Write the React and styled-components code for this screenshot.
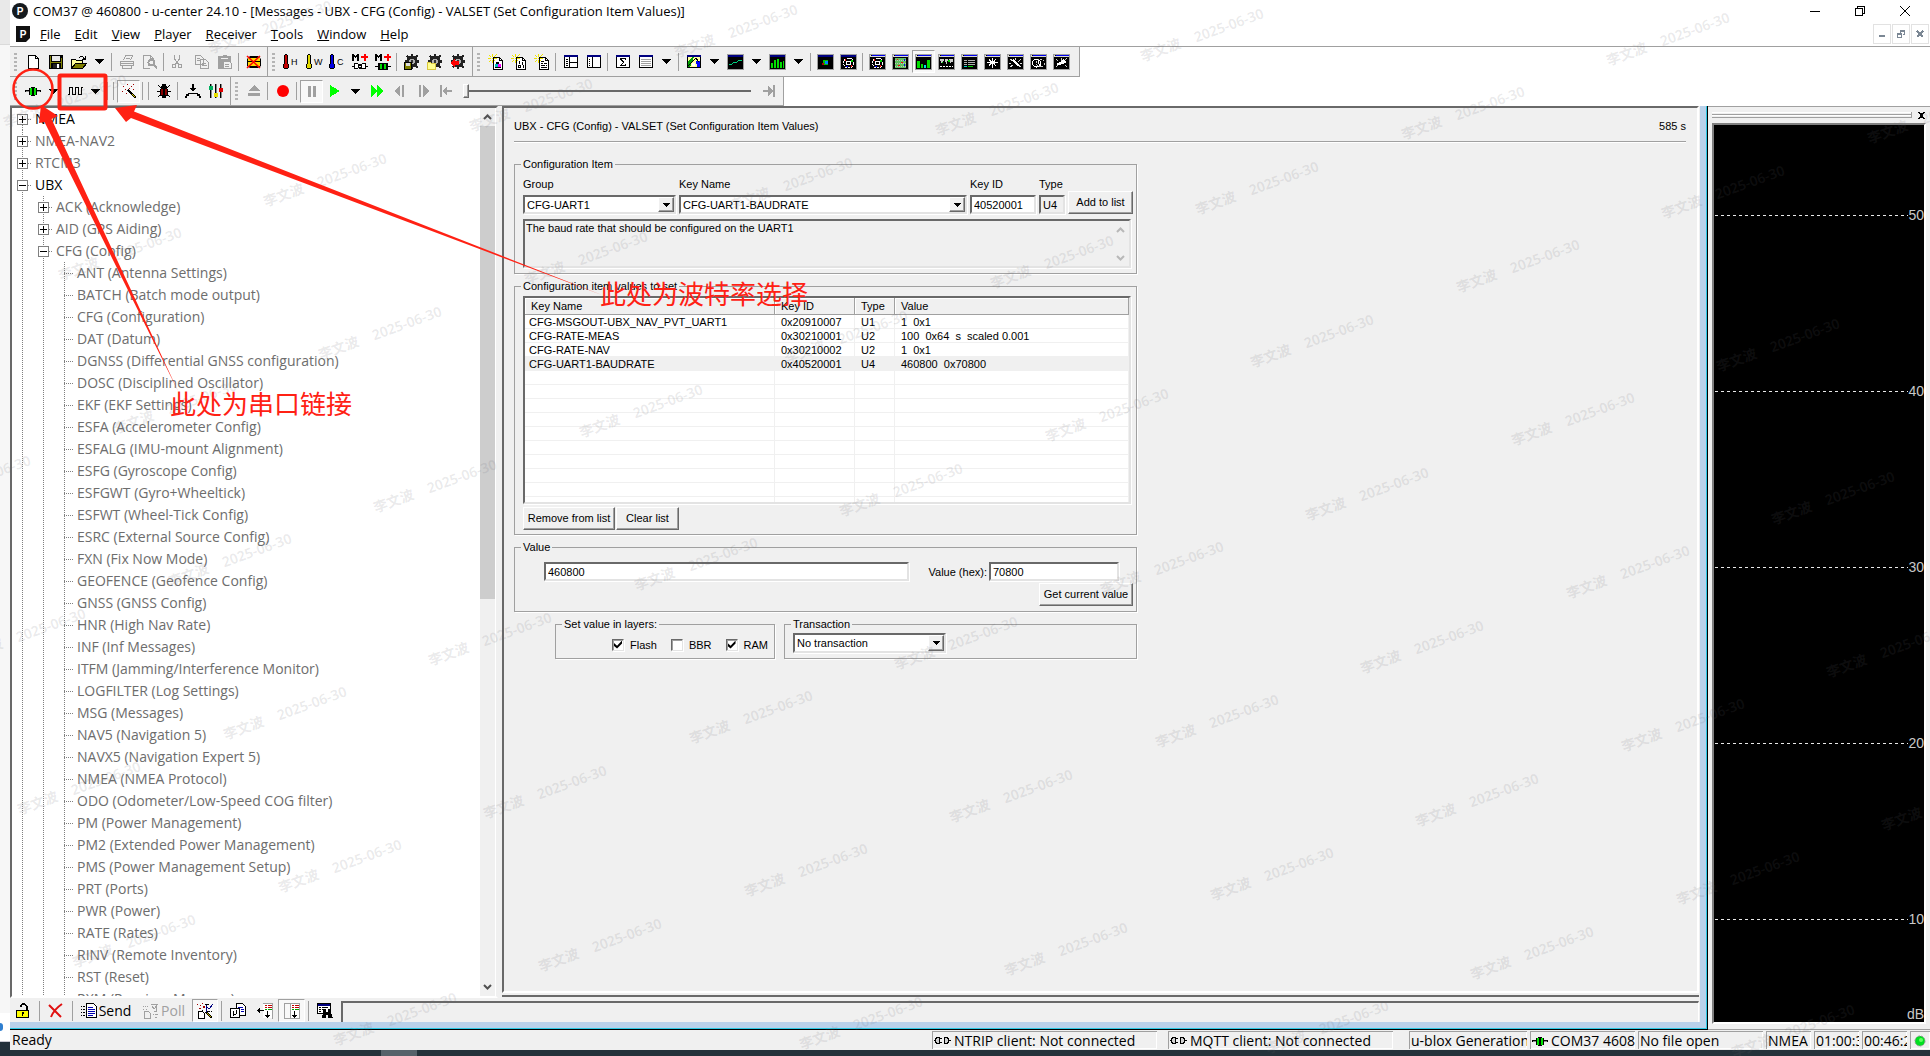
import React from "react";
import styled, { createGlobalStyle, css } from "styled-components";

const UI = `"Open Sans", "Noto Sans", "Noto Sans CJK SC", sans-serif`;
const SMALL = `"Liberation Sans", sans-serif`;
const CJK = `"Noto Sans CJK SC", sans-serif`;
const FACE = "#f0f0f0";
const RED = "#ff2114";

const Global = createGlobalStyle`
  * { box-sizing: border-box; }
  html, body, #root { height: 100%; }
  body { margin: 0; background: #26323a; overflow: hidden; font: 14px/18px ${UI}; color: #000; }
  button, input, select, textarea { font: inherit; color: inherit; margin: 0; border-radius: 0; }
  svg { flex: none; }
`;

const sunken = css`
  border: 2px solid;
  border-color: #696969 #e3e3e3 #e3e3e3 #696969;
  box-shadow: 1px 1px 0 #fff;
`;
const raised = css`
  border: 1px solid;
  border-color: #fff #696969 #696969 #fff;
  box-shadow: inset -1px -1px 0 #a0a0a0;
`;

/* ---------- frame ---------- */
const Desktop = styled.div`
  position: relative;
  display: flex;
  height: 100vh;
  overflow: hidden;
`;
const Behind = styled.aside`
  flex: 0 0 10px;
  display: flex;
  flex-direction: column;
`;
const BehindPart = styled.div`
  flex: ${(p) => p.$size};
  background: ${(p) => p.$bg};
  border-bottom: ${(p) => p.$line || "0"};
  display: flex;
  align-items: center;
`;
const BlueDot = styled.i`
  width: 3px;
  height: 8px;
  background: #2f7fd0;
  border-radius: 0 4px 4px 0;
`;
const Window = styled.div`
  flex: 1;
  min-width: 0;
  display: flex;
  flex-direction: column;
  background: #fff;
`;
const Taskbar = styled.div`
  flex: 0 0 6px;
  background: #24323a;
  display: flex;
  padding-left: 371px;
`;
const TaskButton = styled.i`
  width: 36px;
  background: #56626a;
`;
const TitleBar = styled.header`
  flex: 0 0 24px;
  display: flex;
  align-items: center;
  padding: 0 3px 2px 2px;
`;
const Title = styled.h1`
  margin: 0 0 0 5px;
  flex: 1;
  font: 13px/18px ${UI};
  white-space: nowrap;
`;
const Caption = styled.button`
  width: 45px;
  height: 22px;
  padding: 0;
  border: 0;
  background: none;
  display: grid;
  place-items: center;
`;
const MenuBar = styled.nav`
  flex: 0 0 22px;
  display: flex;
  align-items: center;
  padding: 0 1px 2px 6px;
  border-bottom: 1px solid #a0a0a0;
`;
const Menus = styled.div`
  flex: 1;
  display: flex;
  padding-left: 3px;
`;
const MenuItem = styled.button`
  border: 0;
  background: none;
  padding: 0 7px;
  font-size: 13px;
  white-space: nowrap;
  &::first-letter { text-decoration: underline; }
`;
const ChildCaption = styled.button`
  width: 18px;
  height: 20px;
  margin-left: 1px;
  padding: 0;
  border: 1px solid #e2e2e2;
  background: #fff;
  display: grid;
  place-items: center;
`;

/* ---------- tool bars ---------- */
const BarRow = styled.div`
  display: flex;
  height: ${(p) => p.$h || 30}px;
  background: #fff;
`;
const Bar = styled.div`
  display: flex;
  align-items: center;
  padding: 0 ${(p) => p.$tail || 3}px 0 2px;
  background: ${FACE};
  border-right: 1px solid #a0a0a0;
  border-bottom: 1px solid #a0a0a0;
`;
const Grip = styled.i`
  width: 3px;
  height: 18px;
  margin: 0 4px 0 2px;
  background: repeating-linear-gradient(#b4b4b4 0 2px, transparent 2px 4px);
`;
const Tool = styled.button`
  width: 23px;
  height: 23px;
  flex: none;
  padding: 0;
  display: grid;
  place-items: center;
  border: 1px solid;
  border-color: ${(p) => (p.$on ? "#a0a0a0 #fff #fff #a0a0a0" : "transparent")};
  background: ${(p) => (p.$on ? "#f8f8f8" : "transparent")};
`;
const CaretTool = styled(Tool)`
  width: 19px;
`;
const Divider = styled.i`
  flex: 0 0 6px;
  height: 18px;
  border-left: 1px solid #a0a0a0;
  margin: 0 -2px 0 2px;
`;
const Slider = styled.input`
  appearance: none;
  width: 288px;
  height: 16px;
  margin: 0 6px;
  background: linear-gradient(#696969, #696969) 0 7px / 100% 2px no-repeat;
  &::-webkit-slider-thumb {
    appearance: none;
    width: 6px;
    height: 14px;
    background: ${FACE};
    ${raised}
  }
`;

/* ---------- work area ---------- */
const Work = styled.main`
  flex: 1;
  min-height: 0;
  display: flex;
`;
const Child = styled.section`
  flex: 1;
  min-width: 0;
  display: flex;
  flex-direction: column;
  padding: 0 8px 8px 0;
  background: ${FACE};
  box-shadow: inset -1px -1px 0 #000, inset -2px -2px 0 #2cc8e4, inset -8px -8px 0 #b9d1ea;
`;
const Split = styled.div`
  flex: 1;
  min-height: 0;
  display: flex;
  gap: 4px;
`;
const TreePane = styled.div`
  flex: 0 0 488px;
  display: flex;
  overflow: hidden;
  background: #fff;
  border: 2px solid;
  border-color: #696969 ${FACE} #fff #696969;
`;
const TreeList = styled.ul`
  flex: 1;
  margin: 0;
  padding: 0;
  list-style: none;
  overflow: hidden;
`;
const TreeRow = styled.li`
  display: flex;
  height: 22px;
  line-height: 22px;
  color: ${(p) => (p.$strong ? "#000" : "#6d6d6d")};
  white-space: nowrap;
`;
const dots = (dir) => `repeating-linear-gradient(${dir}, #808080 0 1px, transparent 1px 2px)`;
const Guide = styled.span`
  flex: 0 0 21px;
  margin-right: ${(p) => (p.$branch ? 2 : 0)}px;
  display: grid;
  place-items: center;
  background:
    ${dots("180deg")} 10px ${(p) => (p.$first ? "11px" : "0")} / 1px 100% no-repeat
    ${(p) => (p.$branch ? `, ${dots("90deg")} 10px 11px / 10px 1px no-repeat` : "")};
`;
const Expander = styled.button`
  width: 11px;
  height: 11px;
  padding: 0;
  border: 1px solid #808080;
  background:
    linear-gradient(#000, #000) center / 7px 1px no-repeat,
    ${(p) => (p.$open ? "" : "linear-gradient(#000, #000) center / 1px 7px no-repeat,")}
    #fff;
`;
const ScrollTrack = styled.div`
  flex: 0 0 15px;
  margin-right: 1px;
  display: flex;
  flex-direction: column;
  background: ${FACE};
`;
const ScrollButton = styled.button`
  height: ${(p) => p.$size || 18}px;
  padding: 0;
  border: 0;
  background: ${FACE};
  display: grid;
  place-items: center;
`;
const Thumb = styled.div`
  flex: ${(p) => p.$grow};
  background: ${(p) => p.$bg || "transparent"};
`;
const PanelColumn = styled.div`
  flex: 1;
  min-width: 0;
  display: flex;
  flex-direction: column;
  padding-right: 1px;
`;
const Panel = styled.div`
  flex: 1;
  min-height: 0;
  padding: 10px 11px 0 10px;
  font: 11px/12px ${SMALL};
  border: 2px solid;
  border-color: #696969 #fff #fff #696969;
`;
const PanelEdge = styled.i`
  height: 2px;
  margin: 2px 0 1px;
  background: #696969;
`;
const PanelHead = styled.div`
  display: flex;
  justify-content: space-between;
  align-items: center;
  height: 24px;
  padding-bottom: 8px;
  border-bottom: 1px solid #a0a0a0;
  box-shadow: 0 1px 0 #fff;
`;
const Form = styled.form`
  display: flex;
  flex-direction: column;
  gap: 6px;
  width: 623px;
  margin-top: 16px;
`;
const Group = styled.fieldset`
  margin: 0;
  min-width: 0;
  flex: ${(p) => p.$flex || "none"};
  padding: ${(p) => p.$pad};
  border: 1px solid #a0a0a0;
  box-shadow: 1px 1px 0 #fff;
`;
const Legend = styled.legend`
  height: 12px;
  margin-left: -2px;
  padding: 0 2px;
`;
const Line = styled.div`
  display: flex;
  align-items: flex-end;
  gap: ${(p) => p.$gap ?? 3}px;
`;
const Field = styled.label`
  flex: ${(p) => p.$flex};
  min-width: 0;
  display: flex;
  flex-direction: column;
  gap: 5px;
`;
const TextBox = styled.input`
  width: ${(p) => p.$w || "100%"};
  height: 19px;
  padding: 0 2px;
  background: #fff;
  ${sunken}
  &:read-only { background: ${FACE}; }
`;
const Combo = styled.span`
  display: grid;
  width: ${(p) => p.$w || "100%"};
  height: ${(p) => p.$h || 19}px;
  > * { grid-area: 1 / 1; }
`;
const Select = styled.select`
  appearance: none;
  width: 100%;
  height: 100%;
  padding: 0 18px 0 2px;
  background: #fff;
  ${sunken}
`;
const ComboArrow = styled.span`
  justify-self: end;
  align-self: stretch;
  width: 16px;
  margin: 2px;
  background: ${FACE};
  display: grid;
  place-items: center;
  pointer-events: none;
  ${raised}
`;
const PushButton = styled.button`
  width: ${(p) => p.$w}px;
  height: 23px;
  padding: 0 0 2px;
  background: ${FACE};
  white-space: nowrap;
  ${raised}
`;
const Description = styled.div`
  display: flex;
  height: 49px;
  margin: 5px 2px 0 0;
  ${sunken}
`;
const DescriptionText = styled.textarea`
  flex: 1;
  padding: 1px;
  border: 0;
  resize: none;
  background: ${FACE};
`;
const ListBox = styled.div`
  height: 208px;
  margin: 0 2px 3px 0;
  overflow: hidden;
  background: #fff;
  ${sunken}
`;
const Table = styled.table`
  width: 100%;
  table-layout: fixed;
  border-spacing: 0;
  th {
    height: 17px;
    padding: 0 0 0 6px;
    font-weight: normal;
    text-align: left;
    background: ${FACE};
    border-right: 1px solid #a0a0a0;
    border-bottom: 1px solid #a0a0a0;
    box-shadow: inset 1px 1px 0 #fff;
  }
  td {
    height: 14px;
    padding: 1px 0 0 6px;
    line-height: 12px;
    white-space: pre;
    border-right: 1px solid ${FACE};
    border-bottom: 1px solid ${FACE};
  }
  td:first-child { padding-left: 4px; }
`;
const ListRow = styled.tr`
  background: ${(p) => (p.$selected ? FACE : "#fff")};
`;
const ValueLine = styled(Line)`
  align-items: center;
  margin: 0 14px 0 21px;
`;
const HexLabel = styled.label`
  flex: 1;
  text-align: right;
`;
const RightLine = styled.div`
  display: flex;
  justify-content: flex-end;
  padding-top: 2px;
`;
const Layers = styled.div`
  display: flex;
  gap: 9px;
  padding-left: 41px;
`;
const CheckLine = styled.div`
  display: flex;
  justify-content: flex-end;
  gap: 14px;
  height: 15px;
`;
const Check = styled.label`
  display: flex;
  align-items: center;
  gap: 6px;
`;
const CheckBox = styled.input`
  appearance: none;
  width: 12px;
  height: 12px;
  background: #fff;
  display: grid;
  place-items: center;
  border: 1px solid;
  border-color: #696969 #e3e3e3 #e3e3e3 #696969;
  box-shadow: inset 1px 1px 0 #a0a0a0, 1px 1px 0 #fff;
  &:checked::after {
    content: "";
    width: 8px;
    height: 8px;
    background: #000;
    clip-path: polygon(0 30%, 38% 65%, 100% 0, 100% 38%, 38% 100%, 0 68%);
  }
`;

/* ---------- message bar under the tree ---------- */
const MessageBar = styled.div`
  flex: 0 0 24px;
  display: flex;
  align-items: center;
  padding: 1px 1px 0 0;
`;
const MsgTool = styled.button`
  width: ${(p) => p.$w || 26}px;
  height: 23px;
  flex: none;
  padding: 0 2px;
  display: flex;
  align-items: center;
  justify-content: center;
  gap: 2px;
  border: 1px solid;
  border-color: ${(p) => (p.$on ? "#a0a0a0 #fff #fff #a0a0a0" : "transparent")};
  background: ${(p) => (p.$on ? "#f8f8f8" : "transparent")};
  color: ${(p) => (p.disabled ? "#a0a0a0" : "#000")};
`;
const MsgDivider = styled.i`
  width: 1px;
  height: 20px;
  margin: 0 3px;
  background: #a0a0a0;
`;
const Log = styled.div`
  flex: 1;
  align-self: stretch;
  margin: 2px 0 0 3px;
  border: solid #696969;
  border-width: 2px 0 0 2px;
  border-right: 1px solid #fff;
`;

/* ---------- docked signal view ---------- */
const Dock = styled.aside`
  flex: 0 0 222px;
  display: flex;
  flex-direction: column;
  padding: 5px 4px;
  background: ${FACE};
  border-top: 1px solid #a0a0a0;
  border-bottom: 1px solid #a0a0a0;
`;
const DockHead = styled.div`
  display: flex;
  align-items: center;
  gap: 4px;
  height: 6px;
  margin-bottom: 5px;
`;
const DockGrip = styled.i`
  flex: 1;
  height: 6px;
  border: solid #a0a0a0;
  border-width: 0 1px 1px 0;
  background: linear-gradient(#fff 1px, transparent 1px 2px, #a0a0a0 2px 3px, #fff 3px 4px, transparent 4px);
`;
const DockClose = styled.button`
  width: 10px;
  height: 10px;
  padding: 0;
  border: 0;
  background: none;
  display: grid;
  place-items: center;
`;
const Scope = styled.div`
  flex: 1;
  display: flex;
  flex-direction: column;
  background: #000;
  color: #c8c8c8;
  font: 14px/16px "Liberation Sans", sans-serif;
  border: 2px solid;
  border-color: #808080 #fff #fff #808080;
`;
const Spacer = styled.div`
  flex: ${(p) => p.$grow} 0 0;
  display: flex;
  align-items: flex-end;
  justify-content: flex-end;
`;
const Tick = styled.div`
  flex: 0 0 16px;
  display: flex;
  align-items: center;
  padding-left: 1px;
  &::before {
    content: "";
    flex: 1;
    height: 1px;
    background: repeating-linear-gradient(90deg, #e8e8e8 0 3px, transparent 3px 6px);
  }
`;

/* ---------- status bar ---------- */
const Status = styled.footer`
  flex: 0 0 20px;
  display: flex;
  align-items: flex-end;
  gap: 3px;
  padding: 0 0 1px 2px;
  background: ${FACE};
`;
const Pane = styled.span`
  flex: 0 0 ${(p) => p.$w}px;
  height: 18px;
  margin-left: ${(p) => p.$ml || 0}px;
  display: flex;
  align-items: center;
  gap: 3px;
  padding-left: 1px;
  overflow: hidden;
  white-space: nowrap;
  border: solid #a0a0a0;
  border-width: 1px 0 0 1px;
  box-shadow: inset -1px -1px 0 #fff;
`;
const Ready = styled.span`
  flex: 1;
`;

/* ---------- overlays ---------- */
const Overlay = styled.div`
  position: absolute;
  inset: 0;
  overflow: hidden;
  pointer-events: none;
`;
const Mark = styled.span`
  position: absolute;
  width: 130px;
  height: 20px;
  margin: -10px 0 0 -65px;
  display: flex;
  align-items: center;
  justify-content: space-between;
  font: 600 14px/20px "Noto Sans", ${CJK};
  color: rgba(100, 100, 110, 0.14);
  transform: rotate(-20deg);
`;
const Arrows = styled.svg`
  position: absolute;
  left: 0;
  top: 0;
`;
const Note = styled.strong`
  position: absolute;
  left: ${(p) => p.$x}px;
  top: ${(p) => p.$y}px;
  font: 400 26px/30px ${CJK};
  color: ${RED};
  white-space: nowrap;
`;

/* ---------- drawings ---------- */
const Svg = ({ w = 16, h = 16, children, ...rest }) => (
  <svg width={w} height={h} viewBox={`0 0 ${w} ${h}`} fill="none" aria-hidden="true" shapeRendering="crispEdges" {...rest}>
    {children}
  </svg>
);
const Caret = () => <Svg w={9} h={5}><path d="M0 0h9v1H0zM1 1h7v1H1zM2 2h5v1H2zM3 3h3v1H3zM4 4h1v1H4z" fill="#000" /></Svg>;
const SmallCaret = () => <Svg w={7} h={4}><path d="M0 0h7v1H0zM1 1h5v1H1zM2 2h3v1H2zM3 3h1v1H3z" fill="#000" /></Svg>;
const Chevron = ({ up, color = "#505050" }) => (
  <svg width="9" height="6" viewBox="0 0 9 6" fill="none"><path d={up ? "M1 5l3.5-3.5L8 5" : "M1 1l3.5 3.5L8 1"} stroke={color} strokeWidth="2" /></svg>
);
const Logo = ({ square }) => (
  <svg width={square ? 14 : 16} height={16} viewBox={square ? "1 0 14 16" : "0 0 16 16"} aria-hidden="true">
    {square ? <path d="M1 0h14v12l-4 4H1z" fill="#111" /> : <circle cx="8" cy="8" r="8" fill="#151a1e" />}
    <text x="8" y="12" fontSize="10" fontWeight="700" fill="#fff" textAnchor="middle" fontFamily="Liberation Sans">P</text>
  </svg>
);
const NewIcon = () => <Svg><path d="M3.500 1.500h7l3 3v10h-10z" fill="#fff" stroke="#000" /><path d="M10.500 1.500v3h3" stroke="#000" /></Svg>;
const SaveIcon = () => <Svg><path d="M1 1h14v14H1z" fill="#000" /><path d="M2 2h1v12H2zM13 4h1v10h-1zM3 8h10v1H3z" fill="#808000" /><path d="M4 2h8v5H4z" fill="#e8e8e8" /><path d="M5 10h7v4H5z" fill="#222" /><path d="M9 10h2v4H9z" fill="#fff" /></Svg>;
const OpenIcon = () => (
  <Svg w={18}><path d="M1.500 14.500v-9h4l1 1h6v3" fill="#ffff9c" stroke="#000" /><path d="M1.500 14.500l4-5h11l-4 5z" fill="#808000" stroke="#000" /><path d="M9 3h1v1H9zM10 2h3v1h-3zM13 3h1v1h1V2h1v4h-4V5h1z" fill="#000" /></Svg>
);
const PrintIcon = () => <Svg><path d="M4.500 6.500l2-5h7l-2 5M1.500 7.500h13v4h-13zM3.500 11.500v3h9v-3M7 4h4" stroke="#a0a0a0" /><path d="M2 9h12v1H2z" fill="#a0a0a0" /></Svg>;
const PreviewIcon = () => <Svg><path d="M8 14.500H1.500v-13h7l3 3v3M8.500 1.500v3h3" stroke="#a0a0a0" /><circle cx="9.500" cy="8.500" r="3" stroke="#a0a0a0" strokeWidth="2" /><path d="M11.500 10.500l3.500 4" stroke="#a0a0a0" strokeWidth="2" /></Svg>;
const CutIcon = () => <Svg><path d="M3.500 1v4l4 5M8.500 1v4l-4 5" stroke="#a0a0a0" /><circle cx="3" cy="12" r="2" stroke="#a0a0a0" /><circle cx="9" cy="12" r="2" stroke="#a0a0a0" /></Svg>;
const CopyIcon = () => <Svg><path d="M1.500 1.500h5l3 3v6h-8zM6.500 5.500h5l3 3v6h-8z" fill={FACE} stroke="#a0a0a0" /><path d="M3 4h3v1H3zM3 6h3v1H3zM8 9h4v1H8zM8 11h5v1H8z" fill="#a0a0a0" /></Svg>;
const PasteIcon = () => <Svg><path d="M1 2h4l1-1h3l1 1h4v13H1z" fill="#a0a0a0" /><path d="M4 4h7v1H4z" fill={FACE} /><path d="M6.500 7.500h6l2 2v5h-8z" fill={FACE} stroke="#a0a0a0" /><path d="M8 10h4v1H8zM8 12h4v1H8z" fill="#a0a0a0" /></Svg>;
const PackageXIcon = () => <Svg shapeRendering="auto"><path d="M1 5l3-3h8l3 3v7l-3 2H4l-3-2z" fill="#000" /><path d="M2 4h12v3H2zM2 8h12v4H2z" fill="#ffd800" /><path d="M1 2l13 12M14 2L1 14" stroke="#f00" strokeWidth="1.500" /></Svg>;
const Thermo = ({ color, letter }) => (
  <Svg w={18}><path d="M3 1h2v9H3z" fill={color} /><path d="M2 1h1v9H2zM5 1h1v9H5zM3 0h2v1H3z" fill="#000" /><path d="M1 10h6v4H1zM2 14h4v1H2z" fill="#000" /><path d="M2 10h4v4H2z" fill={color} /><text x="9" y="11" fontSize="9" fill="#000" fontFamily="Liberation Sans">{letter}</text></Svg>
);
const PlugPair = ({ on }) => (
  <Svg><path d="M0 0h2v1h1v1h1V1h1V0h2v7H5V3H4v1H3V3H2v4H0z" fill="#000" /><path d="M9 3h7M12.500 0v7" stroke="#f00" strokeWidth="2" />
    <path d="M0 12h3v1H0zM13 12h3v1h-3z" fill="#000" />
    {on
      ? <><path d="M3 9h10v7H3z" fill="#000" /><path d="M5 10h2v5H5zM9 10h2v5H9z" fill="#00d800" /></>
      : <path d="M2.500 9.500h3l1 1v3l-1 1h-3zM10.500 9.500h3v5h-3l-1-1v-3zM7 10h2v1H7zM7 13h2v1H7z" fill="#fff" stroke="#000" />}</Svg>
);
const gearPath = "M7 0h2v2h2l2-1 1 1-1 2v2h2v3h-2v2l1 2-1 1-2-1H9v2H7v-2H5l-2 1-1-1 1-2V9H1V6h2V4L2 2l1-1 2 1h2z";
const GearIcon = ({ kind }) => (
  <Svg><path d={gearPath} fill="#222" /><path d="M6 5h4v1h1v3h-1v1H6V9H5V6h1z" fill="#b0b0b0" /><path d="M7 6h2v3H7z" fill="#333" />
    {kind === "save" && <><path d="M0 8h8v8H0z" fill="#000" /><path d="M1 9h6v6H1z" fill="#808000" /><path d="M2 9h4v3H2z" fill="#ddd" /></>}
    {kind === "open" && <path d="M.5 8.500h3l1 1h4v6h-8z" fill="#ffff90" stroke="#d8c840" />}
    {kind === "reset" && <path d="M0 9l5-4v2h4v4H5v3z" fill="#f00" />}
  </Svg>
);
const DocSpark = ({ kind }) => (
  <Svg><path d="M5.500 3.500h6l3 3v9h-9z" fill="#fff" stroke="#000" /><path d="M11.500 3.500v3h3" stroke="#000" />
    <path d="M1 1h1v1H1zM2 2h1v1H2zM4 0h1v3H4zM8 0h1v1H8zM7 1h1v1H7zM6 2h1v1H6zM0 4h3v1H0zM4 4h1v1H4zM6 4h3v1H6zM2 6h1v1H2zM1 7h1v1H1zM4 6h1v3H4zM6 6h1v1H6z" fill="#f0e400" />
    {kind === "color" && <><path d="M7 10h3v3H7z" fill="#00c0c0" /><path d="M10 10h3v3h-3z" fill="#f0f" /><path d="M8 8h3v2H8zM7 13h6v1H7z" fill="#000" /></>}
    {kind === "bits" && <path d="M8 7h1v3H8zM11 8h1v3h-1zM7 11h1v3H7zM8 11h1v1H8zM9 11h1v3H9zM8 13h1v1H8zM12 11h1v3h-1z" fill="#000" />}
    {kind === "text" && <path d="M7 7h3v1H7zM7 9h2v1H7zM10 9h3v1h-3zM7 11h4v1H7zM12 11h1v1h-1zM7 13h6v1H7z" fill="#000" />}
  </Svg>
);
const Win = ({ kind }) => (
  <Svg><path d="M1.500 2.500h13v11h-13z" fill="#fff" stroke="#000" /><path d="M1 1h14v2H1z" fill="#000080" />
    {kind === "split" && <path d="M6 3h1v10H6zM7 8h7v1H7zM3 5h2v1H3zM3 7h2v1H3zM3 9h2v1H3zM3 11h2v1H3z" fill="#000" />}
    {kind === "side" && <path d="M6 3h1v10H6zM3 5h1v1H3zM3 7h1v1H3zM3 9h1v1H3zM3 11h1v1H3z" fill="#000" />}
    {kind === "sum" && <path d="M5 4h6v2h-1V5H7v1h1v1h1v2H8v1H7v1h3v-1h1v2H5v-1h1v-1h1V9h1V8H7V7H6V6H5z" fill="#000" />}
    {kind === "rows" && <path d="M3 5h10v1H3zM3 7h10v1H3zM3 9h10v1H3zM3 11h10v1H3z" fill="#a0a0a0" />}
    {kind === "map" && <><path d="M2 3h12v10H2z" fill="#ffffa0" /><path d="M2 13V7l4-4h2L4 13z" fill="#00a000" /><path d="M10 7h4v6h-3z" fill="#00f" /><path d="M6 9h3v3H6z" fill="#fff" /><path d="M2 12l8-8 3 4" stroke="#000" /></>}
  </Svg>
);
const Black = ({ kind, bright }) => (
  <Svg w={17}><path d="M.5.5h16v15H.5z" fill="#000" stroke="#a0a0a0" /><path d={bright ? "M3 1h13v1H3z" : "M1 1h15v2H1z"} fill={bright ? "#0000f0" : "#000080"} />{bright && <path d="M1 1h1v1H1zM1 2h15v1H1z" fill="#d8d8d8" />}
    {kind === "line" && <path d="M2 10l2 1 3-3 2 1 3-3 3 0" stroke="#00d080" />}
    {kind === "bars" && <path d="M2 9h2v5H2zM5 6h2v8H5zM8 5h2v9H8zM11 8h2v6h-2zM14 7h1v7h-1z" fill="#00e000" />}
    {kind === "levels" && <><path d="M2 7h3v7H2zM6 10h2v4H6zM12 6h3v8h-3z" fill="#00e000" /><path d="M9 11h2v3H9z" fill="#00e0e0" /></>}
    {kind === "dot" && <><path d="M6 6h5v5H6z" fill="#00c000" /><path d="M8 7h3v3H8z" fill="#0080ff" /><path d="M5 9h2v2H5z" fill="#a00" /></>}
    {kind === "sky" && <><circle cx="8.500" cy="9" r="5" stroke="#fff" strokeDasharray="2 1" /><circle cx="8.500" cy="9" r="2" stroke="#fff" /><path d="M5 5h1v2H5z" fill="#f00" /><path d="M11 6h2v2h-2z" fill="#00d000" /><path d="M6 12h2v1H6z" fill="#00f" /><path d="M11 11h1v2h-1z" fill="#f00" /></>}
    {kind === "grid" && <><path d="M3 4h11v10H3z" fill="#60c060" /><path d="M3 6h11M3 9h11M3 12h11" stroke="#c0c0c0" strokeDasharray="1 1" /><path d="M5 5h1v1H5zM9 8h2v1H9zM6 11h2v1H6z" fill="#f00" /><path d="M12 5h1v2h-1zM12 10h1v2h-1z" fill="#00f" /></>}
    {kind === "world" && <><path d="M2 5h4v2H5v2H3V7H2zM7 5h3v2H9v3H8V8H7zM11 5h4v3h-2v1h-1V7h-1z" fill="#ccc" /><path d="M10 6h2v2h-2zM4 8h1v1H4z" fill="#00d000" /><path d="M2 12h13" stroke="#fff" strokeDasharray="2 1" /></>}
    {kind === "text" && <><path d="M3 6h3v1H3zM7 6h7v1H7zM3 8h3v1H3zM7 8h7v1H7zM3 10h3v1H3zM7 10h7v1H7z" fill="#b0b0b0" /><path d="M3 12h3v1H3z" fill="#00d0d0" /><path d="M7 12h5v1H7z" fill="#00d000" /></>}
    {kind === "star" && <path d="M8 4h1v3l3-2-1 3h3v1h-3l1 3-3-2v4H8v-4l-3 2 1-3H3V8h3L5 5l3 2z" fill="#fff" />}
    {kind === "dial" && <><path d="M3 5l3 2M14 5l-3 3M8 4v2M3 13l3-2M14 13l-3-2M2 9h2M13 9h2" stroke="#ddd" /><path d="M6 6l6 6" stroke="#fff" strokeWidth="2" /></>}
    {kind === "clock" && <><circle cx="6.500" cy="9" r="4" stroke="#fff" /><circle cx="10.500" cy="9" r="4" stroke="#ccc" strokeDasharray="2 1" /><path d="M8 6v3l3 3" stroke="#fff" /></>}
    {kind === "course" && <><path d="M3 5l2 2M14 4l-3 3M3 13l3-3M14 13l-2-2M8 4v3" stroke="#ccc" /><path d="M4 10l9-2M6 11l5-5" stroke="#fff" strokeWidth="2" /></>}
  </Svg>
);
const PlugIcon = () => <Svg><path d="M0 7h16v2H0z" fill="#000" /><path d="M1 8h3v1H1zM12 8h3v1h-3z" fill="#909090" /><path d="M4 5h2V4h4v1h2v7h-2v1H6v-1H4z" fill="#000" /><path d="M5 5h2v7H5zM9 5h2v7H9z" fill="#00e000" /></Svg>;
const OpenPlugIcon = () => <Svg w={17} h={9}><path d="M0 4h2v1H0zM15 4h2v1h-2z" fill="#000" /><path d="M1.500 2.500l2-1h2v6h-2l-2-1zM10.500 1.500h2l2 1v4l-2 1h-2z" fill="#d0d0d0" stroke="#000" /><path d="M6 2h2v1H6zM6 6h2v1H6z" fill="#000" /></Svg>;
const BaudIcon = () => <Svg><path d="M1 11.500h1.500v-7h3v7h3v-7h3v7h3v-7H16" stroke="#000" /></Svg>;
const WandIcon = () => <Svg><path d="M7 7l8 8" stroke="#000" strokeWidth="2" /><path d="M11 11l3 3" stroke="#e0d000" /><path d="M2 3h1v1H2zM6 1h1v1H6zM10 3h1v1h-1zM12 1h1v1h-1zM1 8h1v1H1zM4 6h1v1H4zM8 5h1v1H8zM12 6h1v1h-1zM5 10h1v1H5z" fill="#a00000" /></Svg>;
const BugIcon = () => <Svg><path d="M6 1h4v2h1v3h1v7h-2v2H6v-2H4V6h1V3h1z" fill="#000" /><path d="M5 6h2v6H5zM9 6h2v6H9z" fill="#8a0000" /><path d="M2 2l3 3M14 2l-3 3M1 8h3M12 8h3M2 14l3-3M14 14l-3-3" stroke="#000" /></Svg>;
const LevelIcon = () => <Svg><path d="M7 1h2v4h2v1h-1v1H9v1H7V7H6V6H5V5h2zM3 10h10v1H3zM1 11h3v2H1zM12 11h3v2h-3zM0 13h2v2H0zM14 13h2v2h-2z" fill="#000" /></Svg>;
const MixerIcon = () => <Svg><path d="M2 1h2v14H2zM7 1h2v14H7zM12 1h2v14h-2z" fill="#000" /><path d="M3 1h1v14H3zM8 1h1v14H8zM13 1h1v14h-1z" fill="#888" /><path d="M1 3h4v4H1z" fill="#00b060" /><path d="M6 10h4v4H6z" fill="#e8e000" /><path d="M11 5h4v4h-4z" fill="#e00000" /></Svg>;
const EjectIcon = () => <Svg><path d="M8 2l6 6H2zM2 10h12v3H2z" fill="#a0a0a0" /></Svg>;
const RecordIcon = () => <Svg shapeRendering="auto"><circle cx="8" cy="8" r="6" fill="#f00" /></Svg>;
const PauseIcon = () => <Svg><path d="M4 3h3v11H4zM9 3h3v11H9z" fill="#a0a0a0" /></Svg>;
const PlayIcon = () => <Svg><path d="M3 2l10 6-10 6z" fill="#0f0" /></Svg>;
const FastIcon = () => <Svg><path d="M2 2l6 6-6 6zM8 2l6 6-6 6z" fill="#0f0" /></Svg>;
const StepBack = () => <Svg><path d="M8 2v12L2 8zM10 2h2v12h-2z" fill="#a0a0a0" /></Svg>;
const StepFwd = () => <Svg><path d="M8 2l6 6-6 6zM4 2h2v12H4z" fill="#a0a0a0" /></Svg>;
const ToStart = () => <Svg><path d="M2 2h2v12H2zM4 8l5-5v4h5v2H9v4z" fill="#a0a0a0" /></Svg>;
const ToEnd = () => <Svg><path d="M12 2h2v12h-2zM12 8L7 3v4H2v2h5v4z" fill="#a0a0a0" /></Svg>;
const LockIcon = () => <Svg><path d="M5.500 4V3l2-2h2l2 2v5" stroke="#000" strokeWidth="2" /><path d="M1.500 7.500h12v7h-12z" fill="#ff0" stroke="#000" /><path d="M7 9h2v2H7zM7 11h1v2H7z" fill="#000" /></Svg>;
const CrossIcon = () => <Svg shapeRendering="auto"><path d="M1 2l12 12M14 1C8 5 5 9 3 14" stroke="#e01010" strokeWidth="2" /></Svg>;
const SendIcon = () => <Svg><path d="M5.500.5h7l3 3v11h-10z" fill="#fff" stroke="#000" /><path d="M7 4h5v1H7zM7 6h7v1H7zM7 8h7v1H7zM7 10h7v1H7zM7 12h5v1H7z" fill="#0000b0" /><path d="M0 3h1v1H0zM2 3h2v1H2zM0 6h1v1H0zM2 6h2v1H2zM0 9h1v1H0zM2 9h2v1H2zM0 12h1v1H0zM2 12h2v1H2z" fill="#000" /></Svg>;
const PollIcon = () => <Svg><path d="M7.500 1.500h6v7h-3M1.500 8.500h4l2 2v5h-6z" stroke="#a0a0a0" /><path d="M9 3l2 3 4-5" stroke="#a0a0a0" /><path d="M0 3h1v1H0zM2 3h1v1H2zM4 3h1v1H4zM0 6h1v1H0zM3 6h1v1H3zM10 11h1v1h-1zM12 11h3v1h-3zM12 14h2v1h-2z" fill="#a0a0a0" /></Svg>;
const AutoPollIcon = () => <Svg><path d="M1.500 8.500h4l2 2v5h-6z" fill="#fff" stroke="#000" /><path d="M9 9l6 6" stroke="#000" strokeWidth="2" /><path d="M10 10l4 4" stroke="#c0b000" /><path d="M9.500 2v7M9 3l3 3 4-5" stroke="#000080" /><path d="M0 1h1v1H0zM3 2h1v1H3zM2 5h2v1H2zM6 3h2v2H6zM5 0h1v1H5z" fill="#a00000" /><path d="M8 1h4v1H8zM5 7h1v1H5zM14 8h1v1h-1zM10 8h3v1h-3z" fill="#000" /></Svg>;
const CopyMsgIcon = () => <Svg><path d="M6.500.5h6l3 3v9h-9z" fill="#fff" stroke="#000" /><path d="M8 4h5v1H8zM11 6h3v1h-3zM11 8h3v1h-3z" fill="#0000b0" /><path d="M.5 5.500h9v9h-9z" fill="#fff" stroke="#000" /><path d="M3 8v5M3 11h3M6 7v4" stroke="#000" strokeWidth="1" /></Svg>;
const ListMsg = ({ side }) => (
  <Svg><path d="M6 1h9v14H6z" fill="#fff" /><path d={side ? "M.5.5h15v15H.5zM6.500.5v15" : "M5.500.5h10v15"} stroke="#a0a0a0" /><path d="M8 2h2v1H8zM11 2h4v1h-4zM8 4h2v1H8zM11 4h4v1h-4z" fill="#c00000" /><path d="M8 6h2v1H8zM11 6h4v1h-4z" fill="#00a000" />
    {!side && <path d="M0 7h7v1H0zM1 6h1v3H1zM2 5h1v5H2z" fill="#000" />}<path d="M10 8h1v7h-1zM8 12h5v1H8zM9 13h3v1H9z" fill="#000" /></Svg>
);
const FindIcon = () => <Svg><path d="M.5.500h13v10H.5z" fill="#fff" stroke="#000" /><path d="M1 1h12v2H1z" fill="#000080" /><path d="M2 4h2v1H2zM5 4h6v1H5zM2 6h2v1H2zM5 6h2v1H5zM2 8h2v1H2z" fill="#000" /><path d="M6 6h3v3h2V6h3v3l2 6h-5v-3h-2v3H5l1-6z" fill="#000" /></Svg>;

/* ---------- content ---------- */
const MENUS = ["File", "Edit", "View", "Player", "Receiver", "Tools", "Window", "Help"];

const TREE = [
  [0, "NMEA", "plus", true], [0, "NMEA-NAV2", "plus"], [0, "RTCM3", "plus"], [0, "UBX", "minus", true],
  [1, "ACK (Acknowledge)", "plus"], [1, "AID (GPS Aiding)", "plus"], [1, "CFG (Config)", "minus"],
  ...[
    "ANT (Antenna Settings)", "BATCH (Batch mode output)", "CFG (Configuration)", "DAT (Datum)",
    "DGNSS (Differential GNSS configuration)", "DOSC (Disciplined Oscillator)", "EKF (EKF Settings)",
    "ESFA (Accelerometer Config)", "ESFALG (IMU-mount Alignment)", "ESFG (Gyroscope Config)",
    "ESFGWT (Gyro+Wheeltick)", "ESFWT (Wheel-Tick Config)", "ESRC (External Source Config)",
    "FXN (Fix Now Mode)", "GEOFENCE (Geofence Config)", "GNSS (GNSS Config)", "HNR (High Nav Rate)",
    "INF (Inf Messages)", "ITFM (Jamming/Interference Monitor)", "LOGFILTER (Log Settings)",
    "MSG (Messages)", "NAV5 (Navigation 5)", "NAVX5 (Navigation Expert 5)", "NMEA (NMEA Protocol)",
    "ODO (Odometer/Low-Speed COG filter)", "PM (Power Management)", "PM2 (Extended Power Management)",
    "PMS (Power Management Setup)", "PRT (Ports)", "PWR (Power)", "RATE (Rates)",
    "RINV (Remote Inventory)", "RST (Reset)", "RXM (Receiver Manager)",
  ].map((name) => [2, name]),
];

const ITEMS = [
  ["CFG-MSGOUT-UBX_NAV_PVT_UART1", "0x20910007", "U1", "1  0x1"],
  ["CFG-RATE-MEAS", "0x30210001", "U2", "100  0x64  s  scaled 0.001"],
  ["CFG-RATE-NAV", "0x30210002", "U2", "1  0x1"],
  ["CFG-UART1-BAUDRATE", "0x40520001", "U4", "460800  0x70800"],
];

const T = ({ icon, name, on }) => <Tool type="button" aria-label={name} $on={on}>{icon}</Tool>;
const Drop = () => <CaretTool type="button" aria-label="More"><Caret /></CaretTool>;

const MainBars = () => (
  <BarRow>
    <Bar $tail={2}>
      <Grip />
      <T name="New" icon={<NewIcon />} /><T name="Save" icon={<SaveIcon />} /><T name="Open" icon={<OpenIcon />} /><Drop /><Divider />
      <T name="Print" icon={<PrintIcon />} /><T name="Preview" icon={<PreviewIcon />} /><Divider />
      <T name="Cut" icon={<CutIcon />} /><T name="Copy" icon={<CopyIcon />} /><T name="Paste" icon={<PasteIcon />} /><Divider />
      <T name="Clear" icon={<PackageXIcon />} />
    </Bar>
    <Bar>
      <Grip />
      <T name="Hot start" icon={<Thermo color="#c00000" letter="H" />} /><T name="Warm start" icon={<Thermo color="#e0d800" letter="W" />} /><T name="Cold start" icon={<Thermo color="#0000e0" letter="C" />} />
      <T name="Debug off" icon={<PlugPair />} /><T name="Debug on" icon={<PlugPair on />} /><Divider />
      <T name="Save config" icon={<GearIcon kind="save" />} /><T name="Load config" icon={<GearIcon kind="open" />} /><T name="Revert config" icon={<GearIcon kind="reset" />} />
    </Bar>
    <Bar $tail={6}>
      <Grip />
      <T name="Packet view" icon={<DocSpark kind="color" />} /><T name="Binary view" icon={<DocSpark kind="bits" />} /><T name="Text view" icon={<DocSpark kind="text" />} /><Divider />
      <T name="Messages view" icon={<Win kind="split" />} /><T name="Configuration view" icon={<Win kind="side" />} /><Divider />
      <T name="Statistic view" icon={<Win kind="sum" />} /><T name="Table view" icon={<Win kind="rows" />} /><Drop /><Divider />
      <T name="Map view" icon={<Win kind="map" />} /><Drop /><T name="Chart view" icon={<Black kind="line" />} /><Drop /><T name="Histogram view" icon={<Black kind="bars" />} /><Drop /><Divider />
      <T name="Camera view" icon={<Black kind="dot" />} /><T name="Deviation map" icon={<Black kind="sky" />} /><Divider />
      <T name="Sky view" icon={<Black bright kind="sky" />} /><T name="Signal grid" icon={<Black bright kind="grid" />} /><T name="Satellite levels" on icon={<Black bright kind="levels" />} />
      <T name="World" icon={<Black bright kind="world" />} /><T name="Data" icon={<Black bright kind="text" />} /><T name="Compass" icon={<Black bright kind="star" />} />
      <T name="Altimeter" icon={<Black bright kind="dial" />} /><T name="Clock" icon={<Black bright kind="clock" />} /><T name="Speed" icon={<Black bright kind="course" />} />
    </Bar>
  </BarRow>
);

const PlayerBars = () => (
  <BarRow $h={29}>
    <Bar>
      <Grip />
      <T name="Connect" icon={<PlugIcon />} /><Drop /><T name="Baud rate" icon={<BaudIcon />} /><Drop /><Divider /><Divider />
      <T name="Autobauding" on icon={<WandIcon />} /><Divider /><Divider />
      <T name="Debug" icon={<BugIcon />} /><Divider />
      <T name="Download" icon={<LevelIcon />} /><T name="Mixer" icon={<MixerIcon />} />
    </Bar>
    <Bar>
      <Grip />
      <T name="Eject" icon={<EjectIcon />} /><Divider /><T name="Record" icon={<RecordIcon />} /><Divider />
      <T name="Pause" on icon={<PauseIcon />} /><T name="Play" icon={<PlayIcon />} /><Drop /><T name="Fast forward" icon={<FastIcon />} />
      <T name="Step back" icon={<StepBack />} /><T name="Step forward" icon={<StepFwd />} /><T name="To start" icon={<ToStart />} />
      <Slider type="range" defaultValue={0} aria-label="Position" />
      <T name="To end" icon={<ToEnd />} />
    </Bar>
  </BarRow>
);

const Tree = () => (
  <TreePane>
    <TreeList>
      {TREE.map(([level, name, box, strong], i) => (
        <TreeRow key={i} $strong={strong}>
          {Array.from({ length: level + 1 }, (_, k) => (
            <Guide key={k} $branch={k === level} $first={i === 0}>
              {k === level && box && <Expander type="button" aria-label={`Toggle ${name}`} $open={box === "minus"} />}
            </Guide>
          ))}
          {name}
        </TreeRow>
      ))}
    </TreeList>
    <ScrollTrack>
      <ScrollButton aria-label="Scroll up"><Chevron up /></ScrollButton>
      <Thumb $grow="475 0 0" $bg="#cdcdcd" />
      <Thumb $grow="380 0 0" />
      <ScrollButton aria-label="Scroll down"><Chevron /></ScrollButton>
    </ScrollTrack>
  </TreePane>
);

const ComboBox = ({ value, label, w, h }) => (
  <Combo $w={w} $h={h}>
    <Select defaultValue={value} aria-label={label}><option>{value}</option></Select>
    <ComboArrow><SmallCaret /></ComboArrow>
  </Combo>
);

const ValsetForm = () => (
  <Form onSubmit={(e) => e.preventDefault()}>
    <Group $pad="8px 3px 5px 8px">
      <Legend>Configuration Item</Legend>
      <Line>
        <Field $flex="0 0 153px">Group<ComboBox value="CFG-UART1" /></Field>
        <Field $flex="1">Key Name<ComboBox value="CFG-UART1-BAUDRATE" /></Field>
        <Field $flex="0 0 66px">Key ID<TextBox defaultValue="40520001" /></Field>
        <Field $flex="0 0 26px">Type<TextBox readOnly value="U4" /></Field>
        <PushButton type="button" $w={65}>Add to list</PushButton>
      </Line>
      <Description>
        <DescriptionText readOnly aria-label="Description" value="The baud rate that should be configured on the UART1" />
        <ScrollTrack>
          <ScrollButton type="button" $size={17} aria-label="Scroll up"><Chevron up color="#b8b8b8" /></ScrollButton>
          <Thumb $grow="1" />
          <ScrollButton type="button" $size={17} aria-label="Scroll down"><Chevron color="#b8b8b8" /></ScrollButton>
        </ScrollTrack>
      </Description>
    </Group>

    <Group $pad="4px 3px 4px 8px">
      <Legend>Configuration item values to set</Legend>
      <ListBox>
        <Table>
          <colgroup><col width="250" /><col width="80" /><col width="40" /><col /></colgroup>
          <thead><tr><th>Key Name</th><th>Key ID</th><th>Type</th><th>Value</th></tr></thead>
          <tbody>
            {ITEMS.map((row, i) => (
              <ListRow key={row[0]} $selected={i === 3}>{row.map((cell, k) => <td key={k}>{cell}</td>)}</ListRow>
            ))}
            {Array.from({ length: 10 }, (_, i) => <ListRow key={i}><td /><td /><td /><td /></ListRow>)}
          </tbody>
        </Table>
      </ListBox>
      <Line $gap={1}>
        <PushButton type="button" $w={92}>Remove from list</PushButton>
        <PushButton type="button" $w={63}>Clear list</PushButton>
      </Line>
    </Group>

    <Group $pad="9px 3px 5px 8px">
      <Legend>Value</Legend>
      <ValueLine $gap={2}>
        <TextBox $w="365px" aria-label="Value" defaultValue="460800" />
        <HexLabel htmlFor="hex">Value (hex):</HexLabel>
        <TextBox id="hex" $w="130px" defaultValue="70800" />
      </ValueLine>
      <RightLine><PushButton type="button" $w={94}>Get current value</PushButton></RightLine>
    </Group>

    <Layers>
      <Group $flex="0 0 220px" $pad="7px 6px 6px 8px">
        <Legend>Set value in layers:</Legend>
        <CheckLine>
          <Check><CheckBox type="checkbox" defaultChecked />Flash</Check>
          <Check><CheckBox type="checkbox" />BBR</Check>
          <Check><CheckBox type="checkbox" defaultChecked />RAM</Check>
        </CheckLine>
      </Group>
      <Group $flex="1" $pad="3px 8px 5px 8px">
        <Legend>Transaction</Legend>
        <ComboBox value="No transaction" label="Transaction" w="153px" h={20} />
      </Group>
    </Layers>
  </Form>
);

const Messages = () => (
  <MessageBar>
    <MsgTool aria-label="Lock"><LockIcon /></MsgTool><MsgDivider />
    <MsgTool aria-label="Clear"><CrossIcon /></MsgTool><MsgDivider />
    <MsgTool $w={60}><SendIcon />Send</MsgTool>
    <MsgTool $w={56} disabled><PollIcon />Poll</MsgTool>
    <MsgTool $on aria-label="Auto poll"><AutoPollIcon /></MsgTool><MsgDivider />
    <MsgTool aria-label="Copy message"><CopyMsgIcon /></MsgTool>
    <MsgTool $w={27} aria-label="Insert"><ListMsg /></MsgTool>
    <MsgTool $on $w={27} aria-label="Append"><ListMsg side /></MsgTool><MsgDivider />
    <MsgTool aria-label="Find"><FindIcon /></MsgTool>
    <Log />
  </MessageBar>
);

const Signal = () => (
  <Dock>
    <DockHead>
      <DockGrip />
      <DockClose aria-label="Close"><Svg w={7} h={7}><path d="M0 0h2v1h3V0h2v1H6v1H5v3h1v1h1v1H5V6H2v1H0V6h1V5h1V2H1V1H0z" fill="#000" /></Svg></DockClose>
    </DockHead>
    <Scope>
      <Spacer $grow={82} />
      {["50", "40", "30", "20"].map((v) => (
        <React.Fragment key={v}><Tick>{v}</Tick><Spacer $grow={160} /></React.Fragment>
      ))}
      <Tick>10</Tick>
      <Spacer $grow={95}>dB</Spacer>
    </Scope>
  </Dock>
);

const StatusBar = () => (
  <Status>
    <Ready>Ready</Ready>
    <Pane $w={225}><OpenPlugIcon />NTRIP client: Not connected</Pane>
    <Pane $w={225} $ml={8}><OpenPlugIcon />MQTT client: Not connected</Pane>
    <Pane $w={118} $ml={13}>u-blox Generation</Pane>
    <Pane $w={105}><PlugIcon />COM37 460800</Pane>
    <Pane $w={125}>No file open</Pane>
    <Pane $w={45}>NMEA</Pane>
    <Pane $w={45}>01:00:35</Pane>
    <Pane $w={45}>00:46:25</Pane>
    <Pane $w={20}><Svg shapeRendering="auto"><circle cx="8" cy="8" r="5" fill="#00e020" stroke="#909090" strokeDasharray="2 1" /><circle cx="9" cy="7" r="2" fill="#60ff60" /></Svg></Pane>
  </Status>
);

const marks = [];
for (let row = -7; row <= 7; row += 1) {
  for (let col = -5; col <= 5; col += 1) {
    const x = 736 + col * 466 + row * 55;
    const y = 31 + col * 4 + row * 153;
    marks.push([x, y], [x + 261, y + 78]);
  }
}
const visibleMarks = marks.filter(([x, y]) => x > -50 && x < 1980 && y > -20 && y < 1070);

const Annotations = () => (
  <Overlay>
    {visibleMarks.map(([x, y]) => (
      <Mark key={`${x},${y}`} style={{ left: x, top: y }}><span>李文波</span><span>2025-06-30</span></Mark>
    ))}
    <Arrows width="900" height="440" viewBox="0 0 900 440" fill="none">
      <circle cx="33" cy="89" r="19.500" stroke={RED} strokeWidth="2.500" />
      <rect x="59.500" y="75.500" width="46" height="33" rx="1" stroke={RED} strokeWidth="4" />
      <path d="M41 105L58 116L51.500 119L178 391L44.500 122L39 123Z" fill={RED} />
      <path d="M115 108L137 105L134 111.500L602 295L131 118L126 122Z" fill={RED} />
    </Arrows>
    <Note $x={170} $y={388}>此处为串口链接</Note>
    <Note $x={600} $y={278}>此处为波特率选择</Note>
  </Overlay>
);

export default function App() {
  return (
    <Desktop>
      <Global />
      <Behind>
        <BehindPart $size="0 0 45px" $bg="#e9e9e9" $line="1px solid #dadada" />
        <BehindPart $size="1" $bg="#f7f7f7" />
        <BehindPart $size="0 0 29px" $bg="#fff" $line="1px solid #c8c8d0"><BlueDot /></BehindPart>
        <BehindPart $size="0 0 14px" $bg="#22303a" />
      </Behind>
      <Window>
        <TitleBar>
          <Logo />
          <Title>COM37 @ 460800 - u-center 24.10 - [Messages - UBX - CFG (Config) - VALSET (Set Configuration Item Values)]</Title>
          <Caption aria-label="Minimize"><Svg w={10} h={10}><path d="M0 5h10v1H0z" fill="#000" /></Svg></Caption>
          <Caption aria-label="Restore"><Svg w={10} h={10}><path d="M.5 2.500h7v7h-7zM2.500 2V.5h7v7H8" stroke="#000" /></Svg></Caption>
          <Caption aria-label="Close"><Svg w={10} h={10} shapeRendering="auto"><path d="M0 0l10 10M10 0L0 10" stroke="#000" /></Svg></Caption>
        </TitleBar>
        <MenuBar>
          <Logo square />
          <Menus>{MENUS.map((m) => <MenuItem key={m}>{m}</MenuItem>)}</Menus>
          <ChildCaption aria-label="Minimize child"><Svg w={8} h={8}><path d="M1 5h6v2H1z" fill="#7b8794" /></Svg></ChildCaption>
          <ChildCaption aria-label="Restore child"><Svg w={8} h={8}><path d="M0 3h5v5H0zM1 5v2h3V5zM3 0h5v5H6V4h1V2H4v1H3z" fill="#7b8794" fillRule="evenodd" /></Svg></ChildCaption>
          <ChildCaption aria-label="Close child"><Svg w={8} h={8}><path d="M1 1l6 6M7 1L1 7" stroke="#7b8794" strokeWidth="2" /></Svg></ChildCaption>
        </MenuBar>
        <MainBars />
        <PlayerBars />
        <Work>
          <Child>
            <Split>
              <Tree />
              <PanelColumn>
                <Panel>
                  <PanelHead><span>UBX - CFG (Config) - VALSET (Set Configuration Item Values)</span><span>585 s</span></PanelHead>
                  <ValsetForm />
                </Panel>
                <PanelEdge />
              </PanelColumn>
            </Split>
            <Messages />
          </Child>
          <Signal />
        </Work>
        <StatusBar />
        <Taskbar><TaskButton /></Taskbar>
      </Window>
      <Annotations />
    </Desktop>
  );
}
